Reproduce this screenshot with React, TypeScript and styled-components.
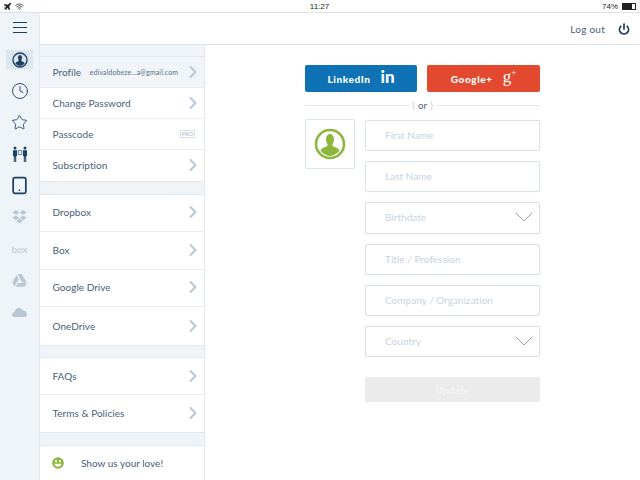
import styled, { createGlobalStyle } from "styled-components";
import { Plane, Wifi, Power, ChevronRight, ChevronDown, Clock, Star, Tablet } from "lucide-react";

const Global = createGlobalStyle`
  html, body { margin: 0; padding: 0; background: #fff; }
  body { font-family: Lato, "Open Sans", sans-serif; overflow: hidden; }
`;

const Page = styled.div`
  width: 640px;
  height: 480px;
  display: flex;
  flex-direction: column;
  overflow: hidden;
`;

const StatusBar = styled.div`
  height: 12px;
  flex: none;
  display: flex;
  align-items: center;
  justify-content: space-between;
  padding: 0 4px 0 3px;
  border-bottom: 1px solid #dfe3e8;
  font-family: "Liberation Sans", sans-serif;
  font-size: 8px;
  color: #222;
`;

const StatusSide = styled.div<{ $end?: boolean }>`
  width: 100px;
  display: flex;
  align-items: center;
  gap: ${({ $end }) => ($end ? 4 : 3)}px;
  justify-content: ${({ $end }) => ($end ? "flex-end" : "flex-start")};
`;

const Battery = styled.span`
  display: inline-block;
  width: 12px;
  height: 5px;
  border: 1px solid #222;
  background: linear-gradient(90deg, #222 74%, #fff 74%);
`;

const Body = styled.div`
  flex: 1;
  display: flex;
  min-height: 0;
`;

const Sidebar = styled.nav`
  width: 39px;
  flex: none;
  background: #eff4f9;
  border-right: 1px solid #e4e9ef;
  display: flex;
  flex-direction: column;
  align-items: center;
  padding-top: 9px;
`;

const Burger = styled.div`
  width: 14px;
  height: 11px;
  margin-bottom: 17px;
  border-top: 1px solid #1d3f63;
  border-bottom: 1px solid #1d3f63;
  position: relative;
  box-sizing: border-box;
  &::after {
    content: "";
    position: absolute;
    left: 0;
    right: 0;
    top: 4px;
    height: 1px;
    background: #1d3f63;
  }
`;

const NavItem = styled.div<{ $active?: boolean }>`
  width: 27px;
  height: 19px;
  margin-bottom: 12.5px;
  display: flex;
  align-items: center;
  justify-content: center;
  background: ${({ $active }) => ($active ? "#dde5ee" : "transparent")};
  color: #1d3f63;
`;

const BoxLogo = styled.span`
  font-size: 10px;
  color: #bfcad6;
`;

const Main = styled.div`
  flex: 1;
  display: flex;
  flex-direction: column;
  min-width: 0;
`;

const Header = styled.header`
  height: 31px;
  flex: none;
  display: flex;
  align-items: center;
  justify-content: flex-end;
  gap: 13px;
  padding-right: 10px;
  border-bottom: 1px solid #dde3ea;
  font-size: 10px;
  letter-spacing: 0.25px;
  color: #4a6077;
`;

const Content = styled.div`
  flex: 1;
  display: flex;
  min-height: 0;
`;

const Menu = styled.aside`
  width: 164px;
  flex: none;
  background: #eff4f9;
  border-right: 1px solid #e4e9ef;
  display: flex;
  flex-direction: column;
  padding-top: 11px;
  gap: 11.5px;
`;

const Group = styled.div`
  background: #fff;
  border-top: 1px solid #e4e9ef;
  border-bottom: 1px solid #e4e9ef;
  display: flex;
  flex-direction: column;
`;

const Row = styled.div<{ $h: number; $active?: boolean }>`
  height: ${({ $h }) => $h}px;
  flex: none;
  box-sizing: border-box;
  display: flex;
  align-items: center;
  padding: 0 9px 1px 12.5px;
  font-size: 10px;
  letter-spacing: 0.03px;
  color: #4a6077;
  background: ${({ $active }) => ($active ? "#f1f5fa" : "#fff")};
  border-bottom: 1px solid #e9edf2;
  &:last-child { border-bottom: 0; }
`;

const RowLabel = styled.span`
  flex: 1;
  white-space: nowrap;
`;

const Email = styled.span`
  font-size: 6.8px;
  letter-spacing: 0.2px;
  margin-right: 10px;
  color: #566b81;
`;

const ProTag = styled.span`
  font-size: 5.5px;
  font-weight: 700;
  color: #bdc9d5;
  border: 1px solid #d6dee7;
  padding: 0 1px;
  line-height: 6px;
`;

const Love = styled.div`
  height: 34px;
  background: #fff;
  border-top: 1px solid #e4e9ef;
  display: flex;
  align-items: center;
  gap: 17px;
  padding-left: 12px;
  font-size: 10px;
  color: #4a6077;
`;

const FormArea = styled.main`
  flex: 1;
  padding: 20px 0 0 100px;
  display: flex;
  flex-direction: column;
`;

const Socials = styled.div`
  width: 235px;
  display: flex;
  gap: 10px;
`;

const Social = styled.div<{ $bg: string; $w: number }>`
  width: ${({ $w }) => $w}px;
  height: 27px;
  border-radius: 2px;
  background: ${({ $bg }) => $bg};
  color: #fff;
  display: flex;
  align-items: center;
  justify-content: center;
  gap: 10px;
  font-size: 10px;
  font-weight: 900;
  letter-spacing: 0.6px;
`;

const SocialMark = styled.span<{ $serif?: boolean }>`
  font-family: ${({ $serif }) => ($serif ? '"Liberation Serif", serif' : "Lato, sans-serif")};
  font-size: 17px;
  font-weight: ${({ $serif }) => ($serif ? 400 : 900)};
  letter-spacing: 0;
  line-height: 1;
  margin-top: -4px;
`;

const Plus = styled.sup`
  font-size: 9px;
  line-height: 0;
`;

const Divider = styled.div`
  width: 235px;
  height: 27px;
  display: flex;
  align-items: center;
  gap: 2px;
  font-size: 9.5px;
  letter-spacing: 0.2px;
  color: #4a6077;
  &::before, &::after {
    content: "";
    flex: 1;
    height: 1px;
    background: #e3e8ee;
  }
`;

const Paren = styled.span`
  color: #bfcbd8;
  margin: 0 1px;
`;

const FormGrid = styled.div`
  width: 235px;
  display: flex;
  gap: 10px;
`;

const Avatar = styled.div`
  width: 50px;
  height: 50px;
  flex: none;
  box-sizing: border-box;
  border: 1px solid #dde4ec;
  box-shadow: 0 0 1px #dde4ec;
  border-radius: 2px;
  display: flex;
  align-items: center;
  justify-content: center;
`;

const Fields = styled.div`
  flex: 1;
  margin-top: 1px;
  display: flex;
  flex-direction: column;
  gap: 10px;
`;

const Field = styled.div`
  height: 31.2px;
  box-sizing: border-box;
  border: 1px solid #d9e1ea;
  box-shadow: 0 0 1px #d9e1ea;
  border-radius: 2px;
  padding: 0 8px 1px 19px;
  display: flex;
  align-items: center;
  justify-content: space-between;
  font-size: 10px;
  letter-spacing: 0.03px;
  color: #c9d3de;
`;

const Update = styled.div`
  height: 25px;
  margin-top: 10px;
  background: #ebebeb;
  color: #f7f7f7;
  font-size: 10px;
  letter-spacing: 0.4px;
  display: flex;
  align-items: center;
  justify-content: center;
`;

function Person({ color, size }: { color: string; size: number }) {
  return (
    <svg width={size} height={size} viewBox="0 0 32 32">
      <circle cx="16" cy="16" r="14" fill="none" stroke={color} strokeWidth="2.6" />
      <path
        d="M12 11c0-3 2-5 4-5s4 2 4 5c0 2-.6 4-1.6 5.500 0 1.500 1 2 2.500 2.600 2.500 1 4 2 4.600 3.400A13 13 0 0 1 16 28a13 13 0 0 1-9.500-5.500c.6-1.400 2.100-2.400 4.600-3.400 1.500-.6 2.500-1.100 2.500-2.600C12.600 15 12 13 12 11z"
        fill={color}
      />
    </svg>
  );
}

function Dropbox() {
  return (
    <svg width="15" height="14" viewBox="0 0 15 14" fill="#b9c5d2">
      <path d="M4 0 7.300 2.400 4 4.800.5 2.400zM11 0l3.500 2.400L11 4.800 7.700 2.400zM4 5.400l3.300 2.400L4 10.200.5 7.800zM11 5.400l3.500 2.400-3.500 2.400-3.300-2.400zM4.200 11l3.300-2.400L10.800 11l-3.300 2.600z" />
    </svg>
  );
}

function Drive() {
  return (
    <svg width="15" height="13" viewBox="0 0 15 13" fill="#b9c5d2">
      <path d="M5.300 0h4.400l5 8.400H10.300zM4.500 1.300 6.700 5 2.600 12.200.3 8.500zM3.700 12.800l2.200-3.700h8.800l-2.200 3.700z" />
    </svg>
  );
}

function Cloud() {
  return (
    <svg width="15" height="10" viewBox="0 0 15 10" fill="#b9c5d2">
      <path d="M3 10C1 10 0 8.800 0 7.500 0 6 1.200 5 2.500 5 3 2.500 4.800 1 7 1c1.800 0 3.300 1 4 2.600C13.300 3.700 15 5.500 15 7.500c0 1.500-1 2.500-2.500 2.500z" />
    </svg>
  );
}

function Team() {
  return (
    <svg width="16" height="16" viewBox="0 0 16 16" fill="#1d3f63">
      <circle cx="3" cy="2" r="1.500" />
      <circle cx="13" cy="2" r="1.500" />
      <path d="M1 4.200h4V10H4.200v6H3.200v-5h-.4v5H1.800v-6H1zM11 4.200h4V10h-.8v6h-1v-5h-.4v5h-1v-6H11z" />
      <path d="M6.300 4.500h3.400v4H6.300z" fill="none" stroke="#1d3f63" strokeWidth=".6" />
    </svg>
  );
}

function Smile() {
  return (
    <svg width="12" height="12" viewBox="0 0 12 12">
      <circle cx="6" cy="6" r="5.800" fill="#8cb63c" />
      <rect x="3.200" y="2.800" width="1.800" height="2.600" rx=".9" fill="#fff" />
      <rect x="7" y="2.800" width="1.800" height="2.600" rx=".9" fill="#fff" />
      <path d="M2.500 6.800h7C9.200 8.800 7.800 9.800 6 9.800S2.800 8.800 2.500 6.800z" fill="#fff" />
    </svg>
  );
}

const ArrowIcon = styled(ChevronRight)`
  flex: none;
  margin: 0 -8px 0 -5px;
  color: #bac7d5;
`;

function Arrow() {
  return <ArrowIcon size={20} strokeWidth={2.4} />;
}

const SelectIcon = styled(ChevronDown)`
  flex: none;
  margin: -16px -9px -16px 0;
  color: #7a8c9f;
`;

const groups = [
  { h: 37.6, items: ["Dropbox", "Box", "Google Drive", "OneDrive"] },
  { h: 37, items: ["FAQs", "Terms & Policies"] },
];

const fields = [
  { label: "First Name" },
  { label: "Last Name" },
  { label: "Birthdate", select: true },
  { label: "Title / Profession" },
  { label: "Company / Organization" },
  { label: "Country", select: true },
];

export default function App() {
  return (
    <Page>
      <Global />
      <StatusBar>
        <StatusSide>
          <Plane size={9} fill="#222" strokeWidth={1} />
          <Wifi size={9} strokeWidth={2} />
        </StatusSide>
        <span>11:27</span>
        <StatusSide $end>
          74% <Battery />
        </StatusSide>
      </StatusBar>
      <Body>
        <Sidebar>
          <Burger />
          <NavItem $active>
            <Person color="#1d3f63" size={16} />
          </NavItem>
          <NavItem>
            <Clock size={18} strokeWidth={1.2} />
          </NavItem>
          <NavItem>
            <Star size={17} strokeWidth={1.2} />
          </NavItem>
          <NavItem>
            <Team />
          </NavItem>
          <NavItem>
            <Tablet size={19} strokeWidth={2.2} />
          </NavItem>
          <NavItem>
            <Dropbox />
          </NavItem>
          <NavItem>
            <BoxLogo>box</BoxLogo>
          </NavItem>
          <NavItem>
            <Drive />
          </NavItem>
          <NavItem>
            <Cloud />
          </NavItem>
        </Sidebar>
        <Main>
          <Header>
            <span>Log out</span>
            <Power size={12} strokeWidth={3.5} color="#1d3f63" />
          </Header>
          <Content>
            <Menu>
              <Group>
                <Row $h={31} $active>
                  <RowLabel>Profile</RowLabel>
                  <Email>edivaldobeze...a@gmail.com</Email>
                  <Arrow />
                </Row>
                <Row $h={31}>
                  <RowLabel>Change Password</RowLabel>
                  <Arrow />
                </Row>
                <Row $h={31}>
                  <RowLabel>Passcode</RowLabel>
                  <ProTag>PRO</ProTag>
                </Row>
                <Row $h={31}>
                  <RowLabel>Subscription</RowLabel>
                  <Arrow />
                </Row>
              </Group>
              {groups.map((g) => (
                <Group key={g.items[0]}>
                  {g.items.map((item) => (
                    <Row key={item} $h={g.h}>
                      <RowLabel>{item}</RowLabel>
                      <Arrow />
                    </Row>
                  ))}
                </Group>
              ))}
              <Love>
                <Smile />
                Show us your love!
              </Love>
            </Menu>
            <FormArea>
              <Socials>
                <Social $bg="#0f72b5" $w={112}>
                  LinkedIn <SocialMark>in</SocialMark>
                </Social>
                <Social $bg="#e2492f" $w={113}>
                  Google+{" "}
                  <SocialMark $serif>
                    g<Plus>+</Plus>
                  </SocialMark>
                </Social>
              </Socials>
              <Divider>
                <Paren>(</Paren>or<Paren>)</Paren>
              </Divider>
              <FormGrid>
                <Avatar>
                  <Person color="#8cb63c" size={32} />
                </Avatar>
                <Fields>
                  {fields.map((f) => (
                    <Field key={f.label}>
                      {f.label}
                      {f.select && <SelectIcon size={32} strokeWidth={0.6} />}
                    </Field>
                  ))}
                  <Update>Update</Update>
                </Fields>
              </FormGrid>
            </FormArea>
          </Content>
        </Main>
      </Body>
    </Page>
  );
}
